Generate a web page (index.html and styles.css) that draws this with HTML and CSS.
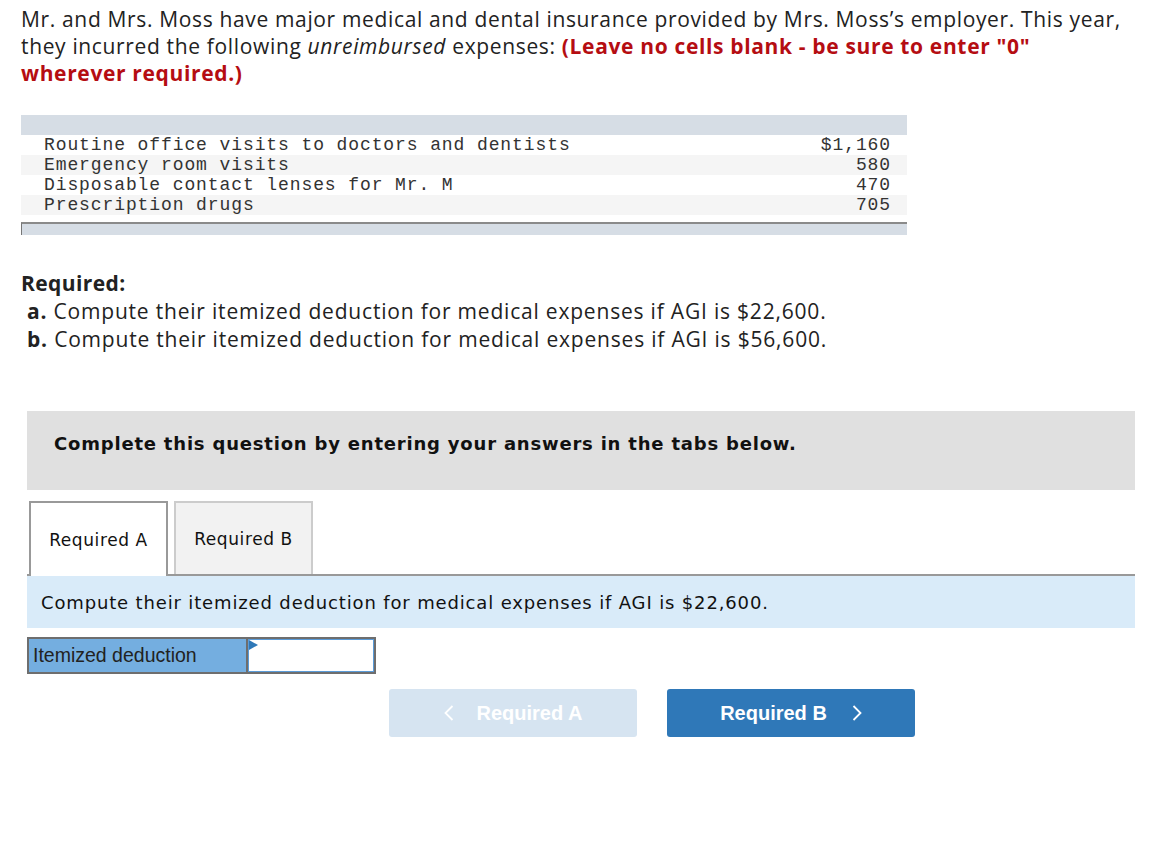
FILE: index.html
```html
<!DOCTYPE html>
<html>
<head>
<meta charset="utf-8">
<link rel="stylesheet" href="styles.css">
</head>
<body>
<div class="page">
  <p class="intro">Mr. and Mrs. Moss have major medical and dental insurance provided by Mrs. Moss’s employer. This year, they incurred the following <em>unreimbursed</em> expenses: <strong class="warn">(Leave no cells blank - be sure to enter "0" wherever required.)</strong></p>

  <div class="data">
    <div class="data-head"></div>
    <div class="data-row"><span>Routine office visits to doctors and dentists</span><span>$1,160</span></div>
    <div class="data-row alt"><span>Emergency room visits</span><span>580</span></div>
    <div class="data-row"><span>Disposable contact lenses for Mr. M</span><span>470</span></div>
    <div class="data-row alt"><span>Prescription drugs</span><span>705</span></div>
    <div class="data-foot"></div>
  </div>

  <div class="required">
    <div class="req-title">Required:</div>
    <div class="req-item"><b>a.</b> Compute their itemized deduction for medical expenses if AGI is $22,600.</div>
    <div class="req-item"><b>b.</b> Compute their itemized deduction for medical expenses if AGI is $56,600.</div>
  </div>

  <div class="panel">
    <div class="notice">Complete this question by entering your answers in the tabs below.</div>

    <div class="tabs">
      <div class="tab active">Required A</div>
      <div class="tab">Required B</div>
    </div>

    <div class="prompt">Compute their itemized deduction for medical expenses if AGI is $22,600.</div>

    <div class="answer">
      <div class="answer-label">Itemized deduction</div>
      <div class="answer-input"><span class="marker"></span></div>
    </div>

    <div class="nav">
      <div class="btn btn-prev"><svg class="chev chev-left" width="10" height="16" viewBox="0 0 10 16"><polyline points="8.5,1 1.5,8 8.5,15" fill="none" stroke="#fff" stroke-width="1.8"/></svg>Required A</div>
      <div class="btn btn-next">Required B<svg class="chev chev-right" width="10" height="16" viewBox="0 0 10 16"><polyline points="1.5,1 8.5,8 1.5,15" fill="none" stroke="#fff" stroke-width="1.8"/></svg></div>
    </div>
  </div>
</div>
</body>
</html>
```
FILE: styles.css
```css
* { box-sizing: border-box; }
body {
  margin: 0;
  background: #fff;
  color: #222;
  font-family: "Open Sans", "Liberation Sans", sans-serif;
}
.page { padding-top: 6px; }
.intro {
  margin: 0 0 0 21px;
  width: 1105px;
  font-size: 21px;
  letter-spacing: 0.65px;
  line-height: 27px;
}
.intro em { font-style: italic; }
.warn { color: #b50d12; font-weight: 700; }

.data {
  margin: 28px 0 0 21px;
  width: 886px;
  font-family: "Liberation Mono", "Courier New", monospace;
  font-size: 18px;
  letter-spacing: 0.9px;
  color: #333;
}
.data-head { height: 20px; background: #d6dde5; }
.data-row {
  height: 20px;
  line-height: 20px;
  display: flex;
  justify-content: space-between;
  padding: 0 16px 0 23px;
}
.data-row.alt { background: #f5f5f5; }
.data-foot {
  margin-top: 7px;
  height: 13px;
  background: #d6dde5;
  border-top: 2px solid #8a8a8a;
  border-left: 1px solid #777;
}

.required {
  margin: 34px 0 0 21px;
  font-size: 21px;
  letter-spacing: 0.8px;
  line-height: 28px;
}
.req-title { font-weight: 700; letter-spacing: 0.4px; }
.req-item { padding-left: 6px; }
.req-item b { font-weight: 700; }

.panel { margin: 58px 0 0 27px; width: 1108px; }
.notice {
  height: 79px;
  background: #e0e0e0;
  padding: 22px 0 0 27px;
  font-family: "DejaVu Sans", Verdana, sans-serif;
  font-weight: 700;
  font-size: 18px;
  letter-spacing: 0.8px;
  color: #111;
}
.tabs {
  margin-top: 11px;
  display: flex;
  gap: 6px;
  padding-left: 2px;
  border-bottom: 2px solid #999;
}
.tab {
  width: 139px;
  height: 73px;
  border: 2px solid #ccc;
  border-bottom: none;
  background: #f2f2f2;
  display: flex;
  align-items: center;
  justify-content: center;
  font-family: "DejaVu Sans", Verdana, sans-serif;
  font-size: 17px;
  letter-spacing: 0.6px;
  color: #111;
}
.tab.active {
  background: #fff;
  border-color: #999;
  height: 75px;
  margin-bottom: -2px;
}
.prompt {
  height: 52px;
  background: #d9ebf9;
  padding-left: 14px;
  display: flex;
  align-items: center;
  font-family: "DejaVu Sans", Verdana, sans-serif;
  font-size: 18px;
  letter-spacing: 0.85px;
  color: #111;
}
.answer {
  margin-top: 9px;
  display: flex;
  width: 349px;
  height: 37px;
  border: 2px solid #6e6e6e;
}
.answer-label {
  width: 219px;
  background: #74aee0;
  border-right: 2px solid #6e6e6e;
  display: flex;
  align-items: center;
  padding-left: 4px;
  font-family: "Liberation Sans", Arial, sans-serif;
  font-size: 19.5px;
  color: #222;
}
.answer-input {
  flex: 1;
  position: relative;
  background: #fff;
  border: 1px solid #5a9bd8;
}
.marker {
  position: absolute;
  left: 0;
  top: 0;
  width: 0;
  height: 0;
  border-top: 5px solid transparent;
  border-bottom: 5px solid transparent;
  border-left: 9px solid #2f78b8;
}
.nav {
  margin: 15px 0 0 362px;
  display: flex;
  gap: 30px;
}
.btn {
  width: 248px;
  height: 48px;
  border-radius: 3px;
  display: flex;
  align-items: center;
  justify-content: center;
  color: #fff;
  font-family: "Liberation Sans", Arial, sans-serif;
  font-weight: 700;
  font-size: 20px;
}
.btn-prev { background: #d6e4f1; }
.btn-next { background: #2f78b8; }
.chev-left { margin-right: 23px; }
.chev-right { margin-left: 25px; }
```
